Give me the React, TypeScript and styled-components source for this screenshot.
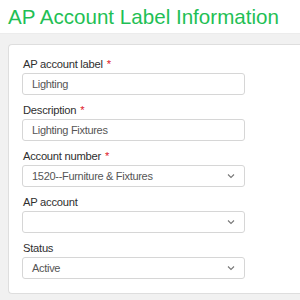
import React from 'react';
import styled, { createGlobalStyle } from 'styled-components';

const GlobalStyle = createGlobalStyle`
  html, body {
    margin: 0;
    padding: 0;
    background: #fff;
    font-family: "Liberation Sans", Arial, sans-serif;
  }
`;

const Page = styled.div`
  width: 300px;
  height: 300px;
  overflow: hidden;
  display: flex;
  flex-direction: column;
`;

const Header = styled.div`
  height: 33px;
  background: #fff;
  padding-left: 8px;
  box-sizing: border-box;
`;

const Title = styled.h1`
  margin: 0;
  padding-top: 5px;
  font-size: 20.6px;
  line-height: 23px;
  font-weight: 400;
  color: #1fbf55;
  white-space: nowrap;
`;

const Body = styled.div`
  flex: 1;
  background: #f1f1f1;
  padding: 10px 0 0 8px;
  border-top: 1px solid #ececec;
`;

const Card = styled.div`
  background: #fff;
  border: 1px solid #dedede;
  border-right: none;
  border-radius: 4px 0 0 4px;
  padding: 13px 0 13px 14px;
  height: 250px;
  box-sizing: border-box;
  display: flex;
  flex-direction: column;
  gap: 9px;
`;

const Field = styled.div`
  display: flex;
  flex-direction: column;
  gap: 2px;
`;

const Label = styled.label`
  font-size: 11.2px;
  line-height: 13px;
  letter-spacing: -0.25px;
  color: #2f2f2f;
`;

const Req = styled.span`
  color: #e0232e;
  margin-left: 4px;
`;

const Box = styled.div`
  width: 223px;
  height: 22px;
  margin-left: -1px;
  box-sizing: border-box;
  border: 1px solid #d6d6d6;
  border-radius: 3px;
  display: flex;
  align-items: center;
  justify-content: space-between;
  padding: 0 9px 0 9px;
  font-size: 11px;
  letter-spacing: -0.3px;
  color: #555;
`;

const Chevron = () => (
  <svg width="8" height="6" viewBox="0 0 8 6">
    <path d="M1 1.5 L4 4.5 L7 1.5" fill="none" stroke="#777" strokeWidth="1.1" />
  </svg>
);

type FieldProps = { label: string; value?: string; required?: boolean; select?: boolean };

const FormField = ({ label, value, required, select }: FieldProps) => (
  <Field>
    <Label>
      {label}
      {required && <Req>*</Req>}
    </Label>
    <Box>
      <span>{value}</span>
      {select && <Chevron />}
    </Box>
  </Field>
);

const App = () => (
  <Page>
    <GlobalStyle />
    <Header>
      <Title>AP Account Label Information</Title>
    </Header>
    <Body>
      <Card>
        <FormField label="AP account label" value="Lighting" required />
        <FormField label="Description" value="Lighting Fixtures" required />
        <FormField label="Account number" value="1520--Furniture & Fixtures" required select />
        <FormField label="AP account" select />
        <FormField label="Status" value="Active" select />
      </Card>
    </Body>
  </Page>
);

export default App;
